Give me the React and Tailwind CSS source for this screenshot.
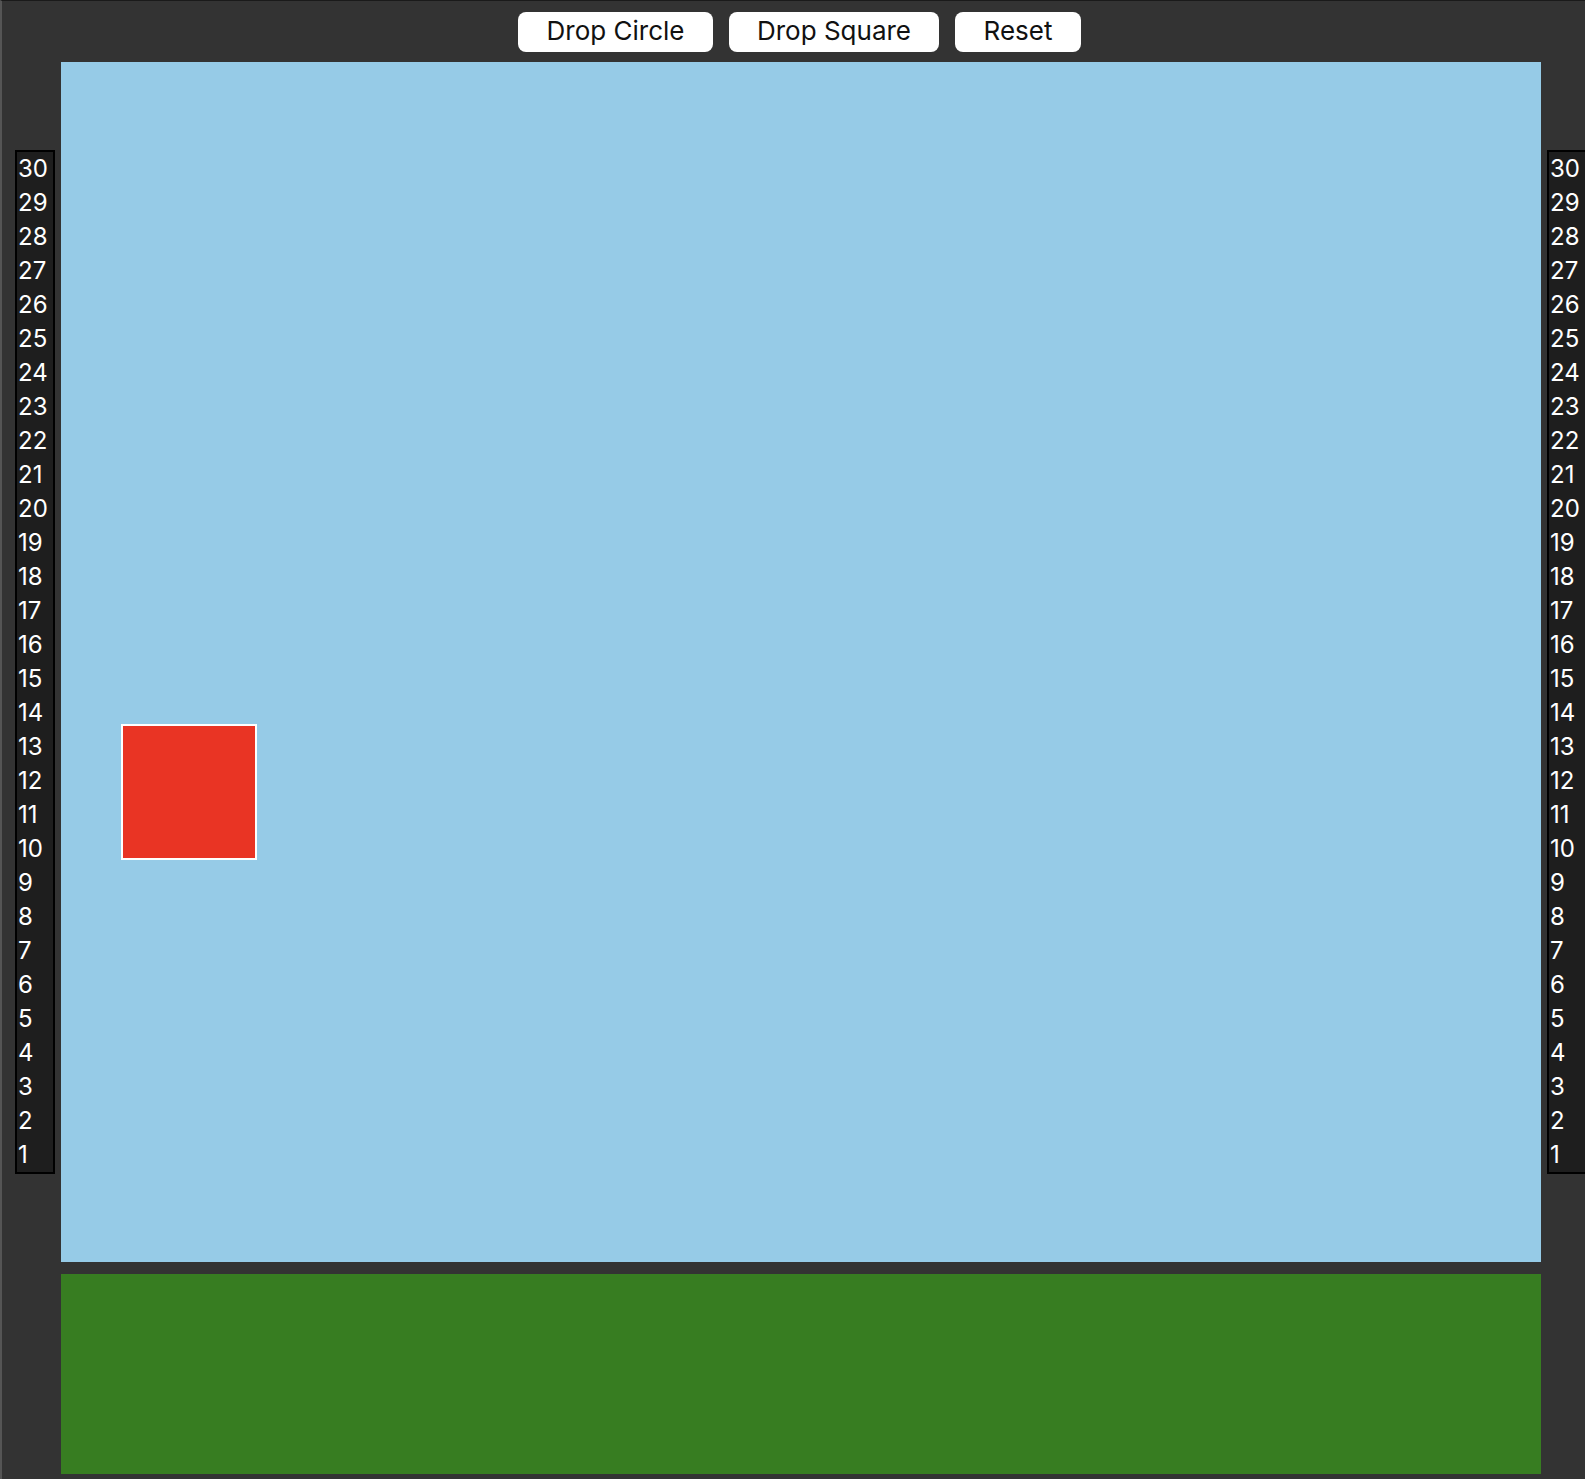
const font = { fontFamily: "Inter, 'Noto Sans', 'Liberation Sans', sans-serif" };

const levels = Array.from({ length: 30 }, (_, i) => 30 - i);

function Ruler() {
  return (
    <div className="shrink-0 w-[40px] h-[1024px] bg-[#1e1e1e] border-2 border-black">
      {levels.map((n) => (
        <div key={n} className="h-[34px] leading-[34px] pl-[1px] text-[24px] text-white">
          {n}
        </div>
      ))}
    </div>
  );
}

function Button({ label, width }) {
  return (
    <button
      type="button"
      className={`${width} h-[40px] pb-[3px] rounded-[8px] bg-white text-[26px] leading-none text-[#111] flex items-center justify-center`}
    >
      {label}
    </button>
  );
}

export default function App() {
  return (
    <div
      style={font}
      className="w-[1585px] h-[1479px] overflow-hidden bg-[#333333] border-l-2 border-l-[#555555] border-t border-t-[#1a1a1a] flex flex-col"
    >
      <div className="h-[61px] pt-[11px] pl-[516px] flex gap-[16px] shrink-0">
        <Button label="Drop Circle" width="w-[195px]" />
        <Button label="Drop Square" width="w-[210px]" />
        <Button label="Reset" width="w-[126px]" />
      </div>

      <div className="flex items-center pl-[13px] gap-[6px] shrink-0">
        <Ruler />
        <div className="relative shrink-0 w-[1480px] h-[1200px] bg-[#96cbe7]">
          <div className="absolute left-[60px] top-[662px] w-[136px] h-[136px] bg-[#e93424] border-2 border-white" />
        </div>
        <Ruler />
      </div>

      <div className="mt-[12px] ml-[59px] shrink-0 w-[1480px] h-[200px] bg-[#377d21]" />
    </div>
  );
}
